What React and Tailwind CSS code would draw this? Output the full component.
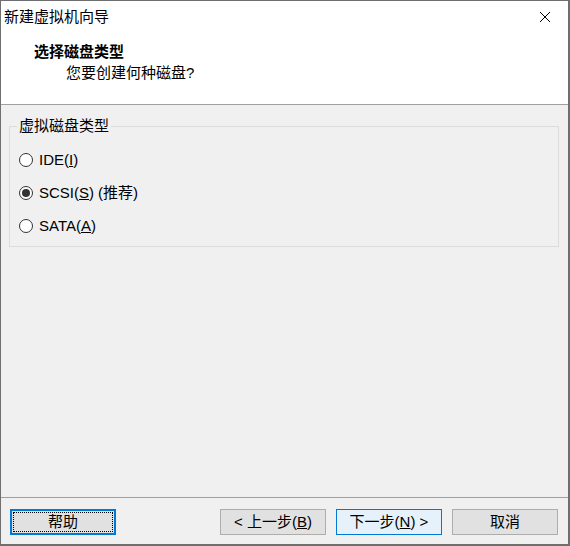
import { useState } from "react";

const FONT = { fontFamily: '"Liberation Sans", "Noto Sans CJK SC", sans-serif' };

const Radio = ({ checked, onClick, children }) => (
    <div className="h-[33px] flex items-center cursor-default" onClick={onClick}>
        <span className="w-[14px] h-[14px] rounded-full border border-[#333] bg-white flex items-center justify-center">
            {checked && <span className="w-[8px] h-[8px] rounded-full bg-[#333]" />}
        </span>
        <span className="ml-[6px] text-[15px] leading-[20px]">{children}</span>
    </div>
);

const Btn = ({ children, primary, focused }) => (
    <button
        className={`w-[106px] h-[26px] text-[15px] leading-[20px] text-black flex items-center justify-center ${
            focused
                ? "bg-[#e1e1e1] border-2 border-[#0078d7] outline-1 outline-dotted outline-black outline-offset-[-4px]"
                : primary
                ? "bg-[#e5f1fb] border border-[#0078d7]"
                : "bg-[#e1e1e1] border border-[#adadad]"
        }`}
    >
        {children}
    </button>
);

export default function App() {
    const [diskType, setDiskType] = useState("scsi");

    return (
        <div style={FONT} className="w-[570px] h-[546px] flex flex-col bg-[#f0f0f0] border-l border-t border-r-2 border-b-2 border-[#6f6f6f] text-black">
            {/* title bar */}
            <div className="h-[31px] shrink-0 bg-white flex items-center justify-between">
                <span className="pl-[3px] text-[15px] leading-[20px]">新建虚拟机向导</span>
                <span className="w-[46px] h-[31px] flex items-center justify-center">
                    <svg width="12" height="12" viewBox="0 0 12 12">
                        <path d="M1 1 L11 11 M11 1 L1 11" stroke="#000" strokeWidth="1" fill="none" />
                    </svg>
                </span>
            </div>

            {/* header */}
            <div className="h-[73px] shrink-0 bg-white pt-[10px] border-b border-[#a0a0a0]">
                <div className="pl-[33px] text-[15px] leading-[20px] font-bold">选择磁盘类型</div>
                <div className="pl-[65px] text-[15px] leading-[21px]">您要创建何种磁盘?</div>
            </div>

            {/* body */}
            <div className="h-[393px] shrink-0 border-b border-[#a0a0a0]">
                <fieldset className="ml-[8px] mt-[11px] w-[550px] border border-[#dcdcdc] pl-[9px] pr-[9px] pt-[7px] pb-[4px]">
                    <legend className="-ml-[2px] px-[2px] text-[15px] leading-[20px]">虚拟磁盘类型</legend>
                    <Radio checked={diskType === "ide"} onClick={() => setDiskType("ide")}>
                        IDE(<span className="underline">I</span>)
                    </Radio>
                    <Radio checked={diskType === "scsi"} onClick={() => setDiskType("scsi")}>
                        SCSI(<span className="underline">S</span>)<span className="ml-[4px]">(推荐)</span>
                    </Radio>
                    <Radio checked={diskType === "sata"} onClick={() => setDiskType("sata")}>
                        SATA(<span className="underline">A</span>)
                    </Radio>
                </fieldset>
            </div>

            {/* footer */}
            <div className="flex-1 flex items-start pt-[11px] pl-[9px] pr-[10px]">
                <Btn focused>帮助</Btn>
                <div className="flex-1" />
                <div className="flex gap-[10px]">
                    <Btn>
                        &lt; 上一步(<span className="underline">B</span>)
                    </Btn>
                    <Btn primary>
                        下一步(<span className="underline">N</span>) &gt;
                    </Btn>
                    <Btn>取消</Btn>
                </div>
            </div>
        </div>
    );
}
